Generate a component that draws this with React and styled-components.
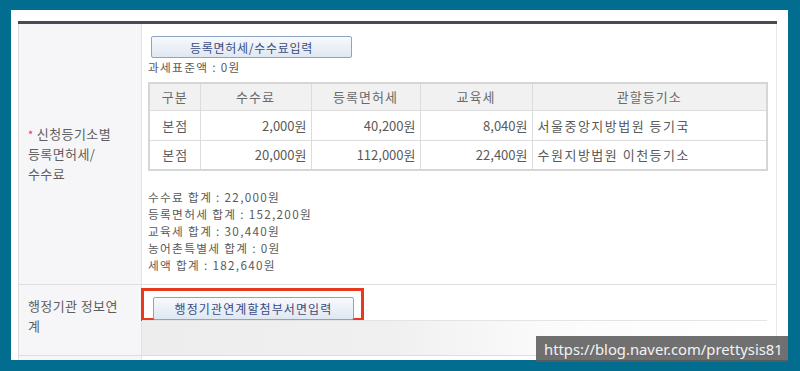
import React from "react";
import styled, { createGlobalStyle } from "styled-components";

const GlobalStyle = createGlobalStyle`
  html, body {
    margin: 0;
    padding: 0;
    background: #036d8f;
  }
  * {
    box-sizing: border-box;
  }
`;

const fees = [
  { kind: "본점", fee: "2,000원", reg: "40,200원", edu: "8,040원", office: "서울중앙지방법원 등기국" },
  { kind: "본점", fee: "20,000원", reg: "112,000원", edu: "22,400원", office: "수원지방법원 이천등기소" },
];

const totals = [
  "수수료 합계 : 22,000원",
  "등록면허세 합계 : 152,200원",
  "교육세 합계 : 30,440원",
  "농어촌특별세 합계 : 0원",
  "세액 합계 : 182,640원",
];

export default function App() {
  return (
    <>
      <GlobalStyle />
      <Screen>
        <Panel>
          <TopBar />
          <FormTable>
            <Row $height={261}>
              <Label $center>
                <span>
                  <Required>*</Required> 신청등기소별
                  <br />
                  등록면허세/
                  <br />
                  수수료
                </span>
              </Label>
              <Content $pad="12px 6px 10px">
                <Button>등록면허세/수수료입력</Button>
                <Line>과세표준액 : 0원</Line>
                <FeeTable>
                  <colgroup>
                    <col style={{ width: 51 }} />
                    <col style={{ width: 111 }} />
                    <col style={{ width: 109 }} />
                    <col style={{ width: 112 }} />
                    <col />
                  </colgroup>
                  <thead>
                    <tr>
                      <Th>구분</Th>
                      <Th>수수료</Th>
                      <Th>등록면허세</Th>
                      <Th>교육세</Th>
                      <Th>관할등기소</Th>
                    </tr>
                  </thead>
                  <tbody>
                    {fees.map((f, i) => (
                      <tr key={i}>
                        <Td $align="center">{f.kind}</Td>
                        <Td $align="right">{f.fee}</Td>
                        <Td $align="right">{f.reg}</Td>
                        <Td $align="right">{f.edu}</Td>
                        <Td $align="left">{f.office}</Td>
                      </tr>
                    ))}
                  </tbody>
                </FeeTable>
                <Totals>
                  {totals.map((t) => (
                    <Line key={t}>{t}</Line>
                  ))}
                </Totals>
              </Content>
            </Row>
            <Row $height={71}>
              <Label $pad="11px 0 0 9px">
                <span>
                  행정기관 정보연
                  <br />계
                </span>
              </Label>
              <Content $pad="3px 0 0 0">
                <LinkRow>
                  <Highlight>
                    <Button $wide>행정기관연계할첨부서면입력</Button>
                  </Highlight>
                </LinkRow>
                <Blurred />
              </Content>
            </Row>
            <Row $height={20}>
              <Label />
              <Content />
            </Row>
          </FormTable>
        </Panel>
        <Watermark>https://blog.naver.com/prettysis81</Watermark>
      </Screen>
    </>
  );
}

const Screen = styled.div`
  position: relative;
  width: 800px;
  height: 371px;
  overflow: hidden;
  background: #036d8f;
  padding: 10px 12px 0 11px;
`;

const Panel = styled.div`
  height: 350px;
  background: #fff;
  padding: 11px 11px 0 7px;
  overflow: hidden;
  font-family: "Noto Sans CJK KR", "Noto Sans", sans-serif;
  color: #5a5a5a;
`;

const TopBar = styled.div`
  height: 3px;
  background: #4a4a55;
`;

const FormTable = styled.div`
  display: flex;
  flex-direction: column;
  border-left: 1px solid #dcdcdc;
`;

const Row = styled.div`
  display: flex;
  height: ${(p) => p.$height}px;
  flex-shrink: 0;
  border-bottom: 1px solid #dedede;
`;

const Label = styled.div`
  width: 123px;
  flex-shrink: 0;
  background: #f6f6f8;
  border-right: 1px solid #e2e2e2;
  display: flex;
  align-items: ${(p) => (p.$center ? "center" : "flex-start")};
  padding: ${(p) => p.$pad || "0 0 0 9px"};
  font-size: 13px;
  line-height: 20px;
  letter-spacing: 0.4px;
  color: #5e5e5e;
`;

const Required = styled.span`
  color: #e2334a;
  font-size: 11px;
`;

const Content = styled.div`
  flex: 1;
  padding: ${(p) => p.$pad || "0"};
  border-right: 1px solid #e8e8e8;
  display: flex;
  flex-direction: column;
  align-items: flex-start;
`;

const Button = styled.button`
  width: 201px;
  height: ${(p) => (p.$wide ? 23 : 22)}px;
  margin-left: 3px;
  padding: 0;
  border: 1px solid #8fa3c3;
  border-radius: 2px;
  background: linear-gradient(#f7fafd, #dfe7f1);
  font-family: "Noto Sans CJK KR", sans-serif;
  font-size: 12px;
  letter-spacing: ${(p) => (p.$wide ? "1.1px" : "0.7px")};
  color: #3a4b7c;
  cursor: pointer;
`;

const Line = styled.div`
  font-size: 11.7px;
  line-height: 17px;
  letter-spacing: 1.3px;
  color: #5a5a5a;
`;

const FeeTable = styled.table`
  margin-top: 7px;
  width: 620px;
  border-collapse: collapse;
  border: 2px solid #d6d6d6;
  font-size: 13px;
  color: #5a5a5a;
  table-layout: fixed;
`;

const Th = styled.th`
  height: 27px;
  background: #f1f1f1;
  border: 1px solid #dcdcdc;
  font-weight: normal;
  letter-spacing: 1px;
  color: #6a6a6a;
  padding: 0;
`;

const Td = styled.td`
  height: 30px;
  border: 1px solid #dcdcdc;
  text-align: ${(p) => p.$align};
  padding: 0 4px 0 5px;
  letter-spacing: ${(p) => (p.$align === "left" ? "1.5px" : p.$align === "center" ? "1px" : "0")};
  white-space: nowrap;
`;

const Totals = styled.div`
  margin-top: 17px;
`;

const LinkRow = styled.div`
  align-self: stretch;
  display: flex;
  align-items: flex-end;
  margin-right: 9px;
`;

const Highlight = styled.div`
  margin-left: -1px;
  padding: 4px 7px 0 6px;
  height: 33px;
  flex-shrink: 0;
  border: 3px solid #e8391f;
`;

const Blurred = styled.div`
  align-self: stretch;
  flex: 1;
  margin-right: 9px;
  margin-top: -1px;
  border-top: 1px solid #e4e4e4;
  background: linear-gradient(90deg, #ededed 0%, #f0f0f0 40%, #fbfbfb 65%, #ffffff 100%);
`;

const Watermark = styled.div`
  position: absolute;
  left: 536px;
  top: 336px;
  width: 252px;
  height: 26px;
  background: rgba(92, 92, 92, 0.88);
  color: #f2f2f2;
  font-family: "Noto Sans", "Open Sans", sans-serif;
  font-size: 14.8px;
  line-height: 26px;
  padding-left: 8px;
  white-space: nowrap;
`;
